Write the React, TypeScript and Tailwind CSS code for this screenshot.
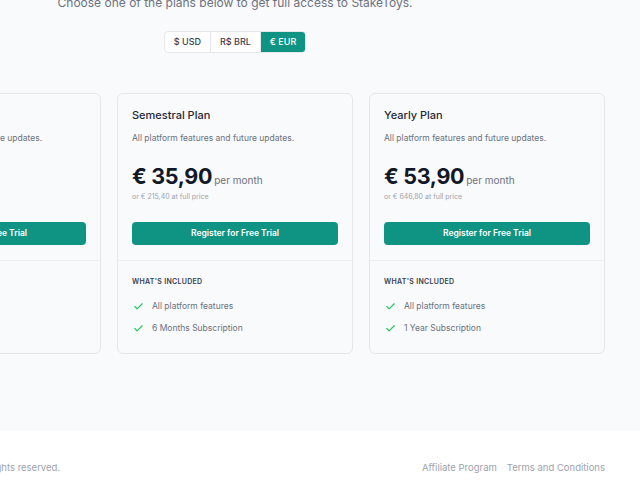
import { Check } from 'lucide-react'

const plans = [
  { name: "Monthly Plan", price: "€ 9,90", full: "", term: "1 Month Subscription" },
  { name: "Semestral Plan", price: "€ 35,90", full: "or € 215,40 at full price", term: "6 Months Subscription" },
  { name: "Yearly Plan", price: "€ 53,90", full: "or € 646,80 at full price", term: "1 Year Subscription" },
]

const currencies = ["$ USD", "R$ BRL", "€ EUR"]

export default function App() {
  return (
    <div className="w-[640px] h-[480px] overflow-hidden bg-[#f9fafb] flex flex-col" style={{ fontFamily: 'Inter, "Noto Sans", sans-serif' }}>
      <div className="w-[740px] ml-[-135px] flex flex-col items-center">
        {/* Heading */}
        <p className="mt-[-6px] text-[12px] leading-[18px] text-[#6b7280]">
          Choose one of the plans below to get full access to StakeToys.
        </p>

        {/* Currency toggle */}
        <div className="mt-[19px] flex rounded-[4px] border border-[#e5e7eb] bg-white overflow-hidden">
          {currencies.map((c) => (
            <button
              key={c}
              className={
                c === "€ EUR"
                  ? "h-[20px] px-[9px] text-[9px] font-medium bg-[#0f9484] text-white"
                  : "h-[20px] px-[9px] text-[9px] font-medium text-[#374151] border-r border-[#e5e7eb]"
              }
            >
              {c}
            </button>
          ))}
        </div>

        {/* Plans */}
        <div className="mt-[40px] w-full grid grid-cols-3 gap-[16px]">
          {plans.map((p) => (
            <div key={p.name} className="h-[261px] rounded-[6px] border border-[#e5e7eb] bg-[#f9fafb] flex flex-col">
              <div className="px-[14px] pt-[14px] pb-[15px] border-b border-[#eceef1]">
                <h3 className="text-[11px] leading-[14px] font-medium text-[#1f2937]">{p.name}</h3>
                <p className="mt-[10px] text-[8.5px] leading-[12px] text-[#6b7280]">All platform features and future updates.</p>
                <div className="mt-[19px] flex items-baseline gap-[2px]">
                  <span className="text-[21.5px] leading-[26px] font-bold tracking-[-0.3px] text-[#111827]">{p.price}</span>
                  <span className="text-[10px] text-[#6b7280]">per month</span>
                </div>
                <p className="mt-[3px] h-[10px] text-[7px] leading-[10px] text-[#9ca3af]">{p.full}</p>
                <button className="mt-[20px] w-full h-[23px] rounded-[4px] bg-[#0f9484] text-white text-[8.5px] font-semibold">
                  Register for Free Trial
                </button>
              </div>
              <div className="px-[14px] pt-[16px]">
                <h4 className="text-[7px] leading-[10px] font-semibold tracking-[0.3px] uppercase text-[#374151]">What's included</h4>
                <ul className="mt-[13px] flex flex-col gap-[10px]">
                  {["All platform features", p.term].map((f) => (
                    <li key={f} className="flex items-center gap-[8px] text-[8.5px] leading-[12px] text-[#6b7280]">
                      <Check className="w-[11px] h-[11px] text-[#22c55e] ml-[1px]" strokeWidth={2.5} />
                      {f}
                    </li>
                  ))}
                </ul>
              </div>
            </div>
          ))}
        </div>
      </div>

      {/* Footer */}
      <div className="mt-auto h-[49px] bg-white">
        <div className="w-[740px] ml-[-135px] pt-[30px] flex justify-between text-[9.5px] text-[#9ca3af]">
          <span>© 2024 StakeToys Ltda. All rights reserved.</span>
          <div className="flex gap-[10px]">
            <span>Affiliate Program</span>
            <span>Terms and Conditions</span>
          </div>
        </div>
      </div>
    </div>
  )
}
